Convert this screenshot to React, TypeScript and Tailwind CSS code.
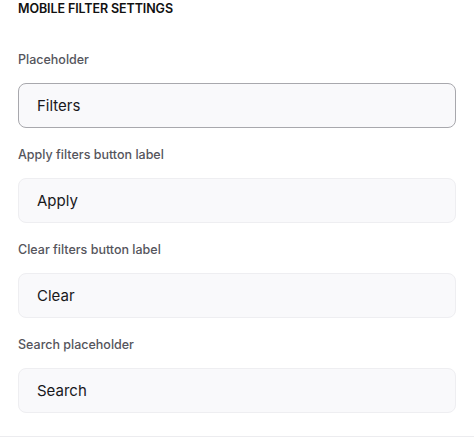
import { useState } from 'react';

const FIELDS = [
  { id: 'placeholder', label: 'Placeholder', value: 'Filters', focused: true },
  { id: 'apply', label: 'Apply filters button label', value: 'Apply' },
  { id: 'clear', label: 'Clear filters button label', value: 'Clear' },
  { id: 'search', label: 'Search placeholder', value: 'Search' },
];

export default function App() {
  const [values, setValues] = useState<Record<string, string>>(
    Object.fromEntries(FIELDS.map((f) => [f.id, f.value])),
  );

  return (
    <div
      className="w-[474px] h-[442px] bg-white overflow-hidden"
      style={{ fontFamily: 'Inter, "Noto Sans", sans-serif' }}
    >
      <div className="px-[18px] pt-[1px] pb-[23px] border-b border-[#ececef]">
        <h2 className="text-[12.5px] leading-[16px] font-semibold text-[#111] tracking-[-0.1px]">
          MOBILE FILTER SETTINGS
        </h2>

        <div className="mt-[34px] flex flex-col gap-[18.6px]">
          {FIELDS.map((f) => (
            <div key={f.id} className="flex flex-col">
              <label className="text-[12.5px] leading-[18px] font-medium text-[#55555c]">
                {f.label}
              </label>
              <input
                value={values[f.id]}
                onChange={(e) => setValues({ ...values, [f.id]: e.target.value })}
                className={
                  'mt-[14px] h-[44.5px] w-full rounded-[8px] bg-[#f9f9fb] px-[18px] text-[15px] text-[#18181b] outline-none border ' +
                  (f.focused ? 'border-[#a8a8ad]' : 'border-[#eeeef1]')
                }
              />
            </div>
          ))}
        </div>
      </div>
    </div>
  );
}
